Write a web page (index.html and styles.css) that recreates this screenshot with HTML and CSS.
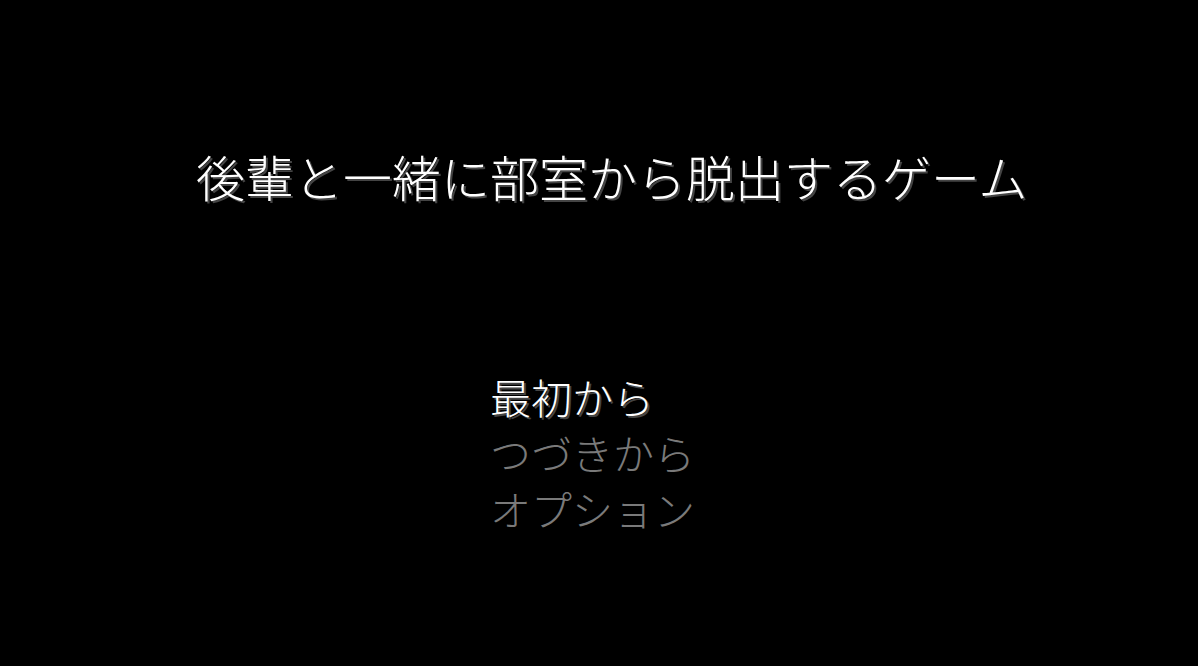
FILE: index.html
```html
<!DOCTYPE html>
<html lang="ja">
<head>
<meta charset="utf-8">
<link rel="stylesheet" href="styles.css">
</head>
<body>
<main class="screen">
  <h1 class="title">後輩と一緒に部室から脱出するゲーム</h1>
  <ul class="menu">
    <li class="item active">最初から</li>
    <li class="item">つづきから</li>
    <li class="item">オプション</li>
  </ul>
</main>
</body>
</html>
```
FILE: styles.css
```css
html, body {
  margin: 0;
  padding: 0;
  background: #000;
}
.screen {
  width: 1198px;
  height: 666px;
  background: #000;
  display: flex;
  flex-direction: column;
  font-family: "Noto Sans CJK JP", "Noto Sans", sans-serif;
  overflow: hidden;
}
.title {
  margin: 148px 0 0 196px;
  font-size: 49px;
  line-height: 56px;
  font-weight: 300;
  color: #fff;
  text-shadow: 2px 2px 0 #444;
  white-space: nowrap;
  letter-spacing: 0;
}
.menu {
  list-style: none;
  margin: 164px 0 0 490px;
  padding: 0;
  display: flex;
  flex-direction: column;
}
.item {
  font-size: 41px;
  line-height: 56px;
  font-weight: 300;
  color: #7a7a7a;
  white-space: nowrap;
}
.item.active {
  color: #fff;
  text-shadow: 2px 2px 0 #444;
}
```
